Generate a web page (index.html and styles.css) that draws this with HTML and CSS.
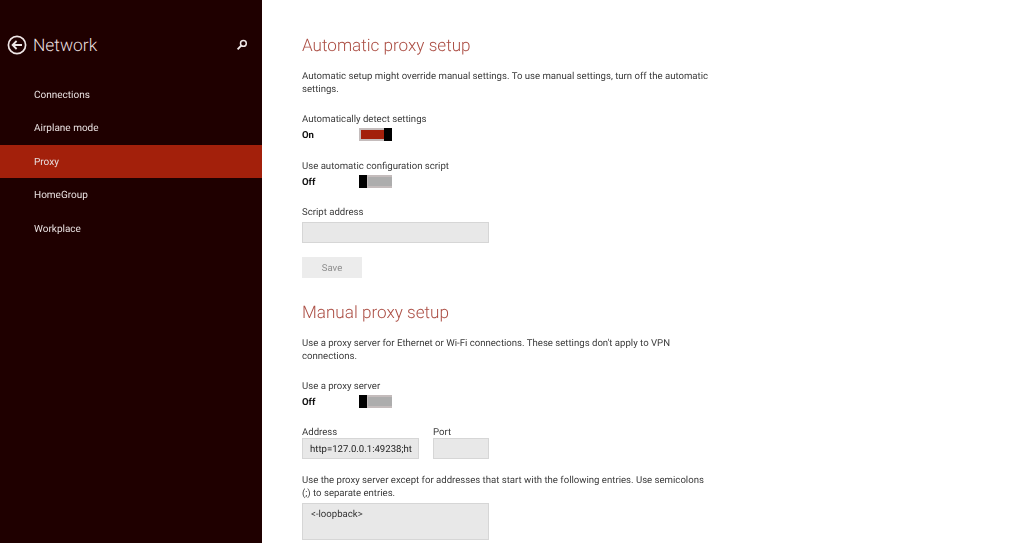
FILE: index.html
```html
<!DOCTYPE html>
<html lang="en">
<head>
    <meta charset="UTF-8">
    <meta name="viewport" content="width=device-width, initial-scale=1.0">
    <title>Network</title>
    <link rel="stylesheet" href="styles.css">
</head>
<body>
    <div class="sidebar">
        <div class="sidebar-head">
            <svg class="back-icon" width="20" height="20" viewBox="0 0 20 20">
                <circle cx="10" cy="10" r="8.6" fill="none" stroke="#efe6e6" stroke-width="1.7"/>
                <path d="M15 10H5.8M9.6 6L5.6 10L9.6 14" fill="none" stroke="#efe6e6" stroke-width="1.8"/>
            </svg>
            <span class="sidebar-title">Network</span>
            <svg class="search-icon" width="12" height="12" viewBox="0 0 12 12">
                <circle cx="7.4" cy="4.4" r="2.9" fill="none" stroke="#efe6e6" stroke-width="1.5"/>
                <path d="M5.2 6.6L1.6 10.4" fill="none" stroke="#efe6e6" stroke-width="1.9"/>
            </svg>
        </div>
        <ul class="nav">
            <li>Connections</li>
            <li>Airplane mode</li>
            <li class="active">Proxy</li>
            <li>HomeGroup</li>
            <li>Workplace</li>
        </ul>
    </div>

    <div class="content">
        <h2>Automatic proxy setup</h2>
        <p class="desc">Automatic setup might override manual settings. To use manual settings, turn off the automatic settings.</p>

        <div class="setting">
            <div class="label">Automatically detect settings</div>
            <div class="toggle-row">
                <span class="state">On</span>
                <span class="toggle on"><span class="fill"></span><span class="thumb"></span></span>
            </div>
        </div>

        <div class="setting">
            <div class="label">Use automatic configuration script</div>
            <div class="toggle-row">
                <span class="state">Off</span>
                <span class="toggle"><span class="thumb"></span><span class="fill"></span></span>
            </div>
        </div>

        <div class="field script-field">
            <div class="label">Script address</div>
            <div class="input wide"></div>
        </div>

        <div class="save-btn">Save</div>

        <h2 class="manual">Manual proxy setup</h2>
        <p class="desc">Use a proxy server for Ethernet or Wi-Fi connections. These settings don't apply to VPN connections.</p>

        <div class="setting">
            <div class="label">Use a proxy server</div>
            <div class="toggle-row">
                <span class="state">Off</span>
                <span class="toggle"><span class="thumb"></span><span class="fill"></span></span>
            </div>
        </div>

        <div class="address-row">
            <div class="field">
                <div class="label">Address</div>
                <div class="input address">http=127.0.0.1:49238;ht</div>
            </div>
            <div class="field">
                <div class="label">Port</div>
                <div class="input port"></div>
            </div>
        </div>

        <p class="desc except">Use the proxy server except for addresses that start with the following entries. Use semicolons (;) to separate entries.</p>
        <div class="input wide exceptions">&lt;-loopback&gt;</div>
    </div>
</body>
</html>
```

FILE: styles.css
```css
html, body {
    height: 100%;
}

body {
    margin: 0;
    display: flex;
    overflow: hidden;
    background: #fff;
    color: #3a3a3a;
    font-family: Roboto, "Open Sans", Arial, sans-serif;
    font-size: 9.6px;
    text-rendering: geometricPrecision;
    filter: blur(0.35px);
}

.sidebar {
    flex: 0 0 262px;
    background: #1f0000;
    color: #e8dfdf;
}

.sidebar-head {
    display: flex;
    align-items: center;
    height: 30px;
    padding: 30px 14px 0 7px;
}

.back-icon {
    margin-right: 6px;
}

.sidebar-title {
    flex: 1;
    padding-top: 2px;
    font-size: 17.4px;
    font-weight: 300;
}

.nav {
    list-style: none;
    margin: 18px 0 0;
    padding: 0;
    font-size: 10px;
}

.nav li {
    height: 33.4px;
    line-height: 35.4px;
    padding-left: 34px;
}

.nav .active {
    background: #a3200b;
}

.content {
    flex: 1;
    padding: 34px 0 0 40px;
    width: 400px;
}

h2 {
    margin: 0;
    color: #ac4f45;
    font-size: 17.1px;
    font-weight: 300;
    line-height: 24px;
}

.manual {
    margin-top: 23px;
}

.desc {
    width: 410px;
    margin: 13px 0 0;
    line-height: 12.6px;
}

.setting {
    margin-top: 17px;
}

.setting + .setting {
    margin-top: 16px;
}

.label {
    line-height: 13px;
}

.toggle-row {
    display: flex;
    align-items: center;
    height: 18px;
}

.state {
    width: 57px;
    color: #111;
    font-weight: 700;
}

.toggle {
    display: flex;
    width: 33px;
    height: 13px;
    margin-bottom: 2px;
    box-sizing: border-box;
    background: #c4bcbc;
}

.toggle .fill {
    flex: 1;
    margin: 2px 0 2px 1px;
    background: #adadad;
}

.toggle.on .fill {
    margin: 2px 0 2px 2px;
    background: #a3200b;
}

.toggle .thumb {
    width: 8px;
    height: 13px;
    background: #000;
}

.script-field {
    margin-top: 15px;
}

.field .label {
    margin-bottom: 3px;
}

.input {
    box-sizing: border-box;
    height: 21px;
    background: #e8e8e8;
    border: 1px solid #d6d6d6;
    line-height: 21px;
    color: #333;
}

.wide {
    width: 187px;
}

.save-btn {
    width: 60px;
    height: 21px;
    margin-top: 14px;
    background: #ececec;
    color: #8e8e8e;
    line-height: 23px;
    text-align: center;
}

.address-row {
    display: flex;
    gap: 14px;
    margin-top: 15px;
}

.address-row .label {
    margin-bottom: -1px;
}

.address {
    width: 117px;
    padding-left: 7px;
    color: #222;
}

.port {
    width: 56px;
}

.except {
    margin-top: 16px;
}

.exceptions {
    height: 37px;
    margin-top: 2px;
    padding-left: 8px;
}
```
